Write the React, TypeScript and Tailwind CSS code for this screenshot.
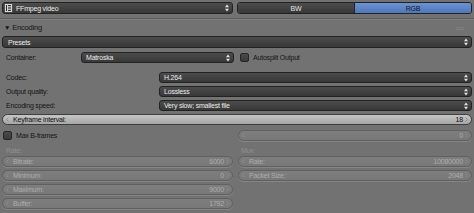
import React from "react";

// Blender-style FFmpeg encoding panel

function UpDown({ color = "#e4e4e4" }: { color?: string }) {
  return (
    <svg width="4" height="8" viewBox="0 0 4 8" className="shrink-0">
      <path d="M0 3.2 L2 0.5 L4 3.2 Z" fill={color} />
      <path d="M0 4.8 L2 7.5 L4 4.8 Z" fill={color} />
    </svg>
  );
}

function Chevron({ dir, color }: { dir: "l" | "r"; color: string }) {
  return (
    <svg width="3" height="5" viewBox="0 0 3 5" className="shrink-0">
      <path
        d={dir === "l" ? "M2.5 0.5 L0.5 2.5 L2.5 4.5" : "M0.5 0.5 L2.5 2.5 L0.5 4.5"}
        fill="none"
        stroke={color}
        strokeWidth="0.9"
      />
    </svg>
  );
}

function Menu({ text, className = "" }: { text: string; className?: string }) {
  return (
    <div
      className={`flex h-[11px] items-center justify-between rounded-[3px] border border-[#222] bg-gradient-to-b from-[#4c4c4c] to-[#383838] pl-[4px] pr-[3px] text-[#ececec] ${className}`}
    >
      <span className="leading-none">{text}</span>
      <UpDown />
    </div>
  );
}

function Check({ label }: { label: string }) {
  return (
    <div className="flex items-center gap-[4px]">
      <div className="h-[9px] w-[9px] rounded-[2px] border border-[#262626] bg-gradient-to-b from-[#4a4a4a] to-[#3a3a3a]" />
      <span className="leading-none text-[#141414]">{label}</span>
    </div>
  );
}

function NumField({ label, value }: { label?: string; value: string }) {
  return (
    <div className="flex h-[11px] items-center rounded-full border border-[#606060] bg-gradient-to-b from-[#7e7e7e] to-[#787878] px-[3px] text-[#adadad] shadow-[0_1px_0_#858585]">
      <Chevron dir="l" color="#8e8e8e" />
      <span className="ml-[4px] flex-1 leading-none">{label}</span>
      <span className="mr-[2px] leading-none">{value}</span>
      <Chevron dir="r" color="#8e8e8e" />
    </div>
  );
}

export default function App() {
  return (
    <div className="h-[213px] w-[474px] overflow-hidden bg-[#727272] font-['Liberation_Sans',Arial,sans-serif] text-[7px] tracking-[-0.2px]">
      {/* top row: file format + color mode */}
      <div className="flex gap-[4px] px-[2px] pt-[2px]">
        <div className="flex h-[12px] w-[231px] items-center justify-between rounded-[3px] border border-[#222] bg-gradient-to-b from-[#4c4c4c] to-[#383838] pl-[1px] pr-[3px] text-[#ececec]">
          <div className="flex items-center gap-[3px]">
            <svg width="9" height="10" viewBox="0 0 9 10">
              <rect x="0.5" y="0.5" width="8" height="9" rx="1" fill="#d8d8d8" stroke="#222" strokeWidth="0.6" />
              <rect x="2" y="2" width="1" height="6" fill="#333" />
              <rect x="4" y="2" width="3" height="1.2" fill="#333" />
              <rect x="4" y="4.4" width="3" height="1.2" fill="#333" />
              <rect x="4" y="6.8" width="3" height="1.2" fill="#333" />
            </svg>
            <span className="leading-none">FFmpeg video</span>
          </div>
          <UpDown />
        </div>
        <div className="flex h-[12px] flex-1 overflow-hidden rounded-[3px] border border-[#222]">
          <div className="flex flex-1 items-center justify-center bg-gradient-to-b from-[#4c4c4c] to-[#383838] text-[#e4e4e4]">
            <span className="leading-none">BW</span>
          </div>
          <div className="flex flex-1 items-center justify-center border-l border-[#222] bg-gradient-to-b from-[#6b93d3] to-[#5077b8] text-[#0c1426]">
            <span className="leading-none">RGB</span>
          </div>
        </div>
      </div>

      {/* panel header */}
      <div className="mt-[4px] border-t border-[#5a5a5a]" />
      <div className="border-t border-[#808080]" />
      <div className="flex h-[16px] items-center justify-between pl-[4px] pr-[10px] text-[#151515]">
        <div className="flex items-center gap-[2px]">
          <span className="text-[6.5px] leading-none">▼</span>
          <span className="text-[7.5px] leading-none">Encoding</span>
        </div>
        <div className="flex flex-col gap-[1px]">
          <div className="h-[1px] w-[8px] bg-[#808080]" />
          <div className="h-[1px] w-[8px] bg-[#808080]" />
        </div>
      </div>

      <div className="px-[2px]">
        <Menu text="Presets" className="h-[12px] pl-[5px]" />
      </div>

      {/* container row */}
      <div className="mt-[4px] flex items-center px-[2px]">
        <span className="w-[79px] pl-[4px] leading-none text-[#141414]">Container:</span>
        <Menu text="Matroska" className="w-[153px]" />
        <div className="ml-[6px]">
          <Check label="Autosplit Output" />
        </div>
      </div>

      {/* codec rows */}
      <div className="mt-[9px] flex flex-col gap-[3px] px-[2px]">
        {[
          ["Codec:", "H.264"],
          ["Output quality:", "Lossless"],
          ["Encoding speed:", "Very slow; smallest file"],
        ].map(([label, value]) => (
          <div key={label} className="flex items-center">
            <span className="w-[157px] pl-[4px] leading-none text-[#141414]">{label}</span>
            <Menu text={value} className="flex-1" />
          </div>
        ))}
        <div className="flex h-[11px] items-center rounded-full border border-[#3e3e3e] bg-gradient-to-b from-[#c6c6c6] to-[#a6a6a6] px-[3px] text-[#0e0e0e]">
          <Chevron dir="l" color="#888" />
          <span className="ml-[4px] flex-1 leading-none">Keyframe interval:</span>
          <span className="mr-[2px] leading-none">18</span>
          <Chevron dir="r" color="#888" />
        </div>
      </div>

      {/* bitrate section */}
      <div className="mt-[5px] grid grid-cols-[231px_1fr] gap-x-[5px] px-[2px]">
        <div className="flex flex-col">
          <div className="flex h-[11px] items-center pl-[1px]">
            <Check label="Max B-frames" />
          </div>
          <span className="mt-[6px] h-[8px] pl-[4px] leading-none text-[#909090]">Rate:</span>
          <div className="mt-[1px] flex flex-col gap-[3px]">
            <NumField label="Bitrate:" value="6000" />
            <NumField label="Minimum:" value="0" />
            <NumField label="Maximum:" value="9000" />
            <NumField label="Buffer:" value="1792" />
          </div>
        </div>
        <div className="flex flex-col">
          <NumField value="0" />
          <span className="mt-[6px] h-[8px] pl-[3px] leading-none text-[#909090]">Mux:</span>
          <div className="mt-[1px] flex flex-col gap-[3px]">
            <NumField label="Rate:" value="10080000" />
            <NumField label="Packet Size:" value="2048" />
          </div>
        </div>
      </div>
    </div>
  );
}
